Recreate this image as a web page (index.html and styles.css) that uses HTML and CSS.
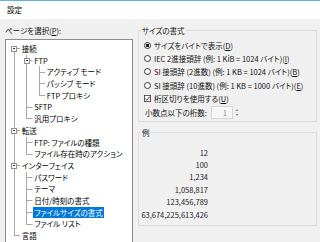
FILE: index.html
```html
<!DOCTYPE html>
<html lang="ja">
<head>
    <meta charset="UTF-8">
    <title>設定</title>
    <link rel="stylesheet" href="styles.css">
</head>
<body>
    <div class="window">
        <div class="titlebar">設定</div>
        <div class="content">
            <div class="pages">
                <div class="pages-label">ページを選択(<u>P</u>):</div>
                <div class="tree">
                    <div class="row"><span class="g first"><i class="box"></i></span><span class="label">接続</span></div>
                    <div class="row"><span class="g pipe"></span><span class="g tee"><i class="box"></i></span><span class="label">FTP</span></div>
                    <div class="row"><span class="g pipe"></span><span class="g pipe"></span><span class="g tee"></span><span class="label">アクティブ モード</span></div>
                    <div class="row"><span class="g pipe"></span><span class="g pipe"></span><span class="g tee"></span><span class="label">パッシブ モード</span></div>
                    <div class="row"><span class="g pipe"></span><span class="g pipe"></span><span class="g ell"></span><span class="label">FTP プロキシ</span></div>
                    <div class="row"><span class="g pipe"></span><span class="g tee"></span><span class="label">SFTP</span></div>
                    <div class="row"><span class="g pipe"></span><span class="g ell"></span><span class="label">汎用プロキシ</span></div>
                    <div class="row"><span class="g tee"><i class="box"></i></span><span class="label">転送</span></div>
                    <div class="row"><span class="g pipe"></span><span class="g tee"></span><span class="label">FTP: ファイルの種類</span></div>
                    <div class="row"><span class="g pipe"></span><span class="g ell"></span><span class="label">ファイル存在時のアクション</span></div>
                    <div class="row"><span class="g tee"><i class="box"></i></span><span class="label">インターフェイス</span></div>
                    <div class="row"><span class="g pipe"></span><span class="g tee"></span><span class="label">パスワード</span></div>
                    <div class="row"><span class="g pipe"></span><span class="g tee"></span><span class="label">テーマ</span></div>
                    <div class="row"><span class="g pipe"></span><span class="g tee"></span><span class="label">日付/時刻の書式</span></div>
                    <div class="row"><span class="g pipe"></span><span class="g tee"></span><span class="label selected">ファイルサイズの書式</span></div>
                    <div class="row"><span class="g pipe"></span><span class="g ell"></span><span class="label">ファイル リスト</span></div>
                    <div class="row"><span class="g ell"></span><span class="label">言語</span></div>
                </div>
            </div>

            <div class="settings">
                <fieldset class="group format">
                    <legend>サイズの書式</legend>
                    <div class="option"><span class="radio on"></span>サイズをバイトで表示(<u>D</u>)</div>
                    <div class="option"><span class="radio"></span>IEC 2進接頭辞 (例: 1 KiB = 1024 バイト)(<u>I</u>)</div>
                    <div class="option"><span class="radio"></span>SI 接頭辞 (2進数) (例: 1 KB = 1024 バイト)(<u>B</u>)</div>
                    <div class="option"><span class="radio"></span>SI 接頭辞 (10進数) (例: 1 KB = 1000 バイト)(<u>E</u>)</div>
                    <div class="option"><span class="check">
                        <svg width="7" height="7" viewBox="0 0 7 7"><path d="M1.2 3.6 L2.8 5.2 L5.9 1.6" fill="none" stroke="#222" stroke-width="0.9"/></svg>
                    </span>桁区切りを使用する(<u>U</u>)</div>
                    <div class="decimals">
                        <span class="decimals-label">小数点以下の桁数:</span>
                        <span class="spin-box">1</span>
                        <svg class="spin-arrows" width="6" height="13" viewBox="0 0 6 13">
                            <path d="M1.5 5 L3 3 L4.5 5 Z" fill="#8a8a8a"/>
                            <path d="M1.5 8 L3 10 L4.5 8 Z" fill="#8a8a8a"/>
                        </svg>
                    </div>
                </fieldset>

                <fieldset class="group example">
                    <legend>例</legend>
                    <div class="samples">
                        <div>12</div>
                        <div>100</div>
                        <div>1,234</div>
                        <div>1,058,817</div>
                        <div>123,456,789</div>
                        <div>63,674,225,613,426</div>
                    </div>
                </fieldset>
            </div>
        </div>
    </div>
</body>
</html>
```

FILE: styles.css
```css
* {
    box-sizing: border-box;
}
body {
    margin: 0;
    font-family: "Noto Sans CJK JP", sans-serif;
    font-size: 7.5px;
    font-feature-settings: "palt" 1;
    color: #111;
}
u {
    text-decoration-thickness: 0.5px;
    text-underline-offset: 1px;
}

.window {
    width: 320px;
    height: 242px;
    background-color: #f0f0f0;
    border-top: 1px solid #5fb2e2;
    overflow: hidden;
}
.titlebar {
    height: 18px;
    line-height: 18px;
    padding-left: 7px;
    background-color: #fff;
    color: #000;
}
.content {
    display: flex;
    padding: 6px 0 0 5px;
}

/* page tree */
.pages {
    width: 128px;
}
.pages-label {
    line-height: 11px;
    margin-bottom: 3px;
}
.tree {
    height: 210px;
    padding: 3px 0 0 1.75px;
    background-color: #fff;
    border: 1px solid #8c8c8c;
    color: #000;
}
.row {
    display: flex;
    height: 11.7px;
    line-height: 11.7px;
    white-space: nowrap;
}
.g {
    display: flex;
    align-items: center;
    justify-content: center;
    flex: 0 0 12.5px;
    height: 100%;
    background-repeat: no-repeat;
}
.pipe {
    background-image: linear-gradient(#a9a9a9, #a9a9a9);
    background-size: 1px 100%;
    background-position: center top;
}
.tee {
    background-image: linear-gradient(#a9a9a9, #a9a9a9), linear-gradient(#a9a9a9, #a9a9a9);
    background-size: 1px 100%, 50% 1px;
    background-position: center top, right center;
}
.ell {
    background-image: linear-gradient(#a9a9a9, #a9a9a9), linear-gradient(#a9a9a9, #a9a9a9);
    background-size: 1px 50%, 50% 1px;
    background-position: center top, right center;
}
.first {
    background-image: linear-gradient(#a9a9a9, #a9a9a9), linear-gradient(#a9a9a9, #a9a9a9);
    background-size: 1px 50%, 50% 1px;
    background-position: center bottom, right center;
}
.box {
    width: 6px;
    height: 6px;
    border: 1px solid #8f8f8f;
    background: #fff linear-gradient(#333, #333) center / 2px 1px no-repeat;
}
.label {
    padding: 0 1.5px;
}
.label.selected {
    background-color: #0078d7;
    color: #fff;
}

/* right side */
.settings {
    width: 179px;
    margin-left: 5px;
}
.group {
    margin: 0;
    padding: 0;
    border: 1px solid #dcdcdc;
}
.group legend {
    margin-left: 2px;
    padding: 0 1px;
    line-height: 11px;
}
.format {
    padding: 2.5px 0 2px;
}
.option {
    display: flex;
    align-items: center;
    height: 13.4px;
    padding-left: 5px;
    white-space: nowrap;
}
.radio,
.check {
    flex: 0 0 7px;
    width: 7px;
    height: 7px;
    margin-right: 3px;
    border: 1px solid #333;
    background-color: #fff;
}
.radio {
    border-radius: 50%;
}
.radio.on {
    background: #fff radial-gradient(circle, #222 0 1.6px, transparent 2px);
}
.check {
    display: flex;
    border: none;
    box-shadow: inset 0 0 0 0.8px #333;
}
.decimals {
    display: flex;
    align-items: center;
    height: 13.4px;
    padding-left: 6px;
}
.decimals-label {
    width: 66px;
}
.spin-box {
    width: 22px;
    height: 13px;
    line-height: 11px;
    padding-right: 5px;
    text-align: right;
    color: #8a8a8a;
    background-color: #f7f7f7;
    border: 1px solid #d5d5d5;
}
.spin-arrows {
    margin-left: 1px;
}

.example {
    margin-top: 5px;
    padding: 8.8px 0 4.5px;
}
.samples {
    width: 69px;
    text-align: right;
    color: #222;
}
.samples div {
    height: 12.4px;
    line-height: 12.4px;
    white-space: nowrap;
}
```
